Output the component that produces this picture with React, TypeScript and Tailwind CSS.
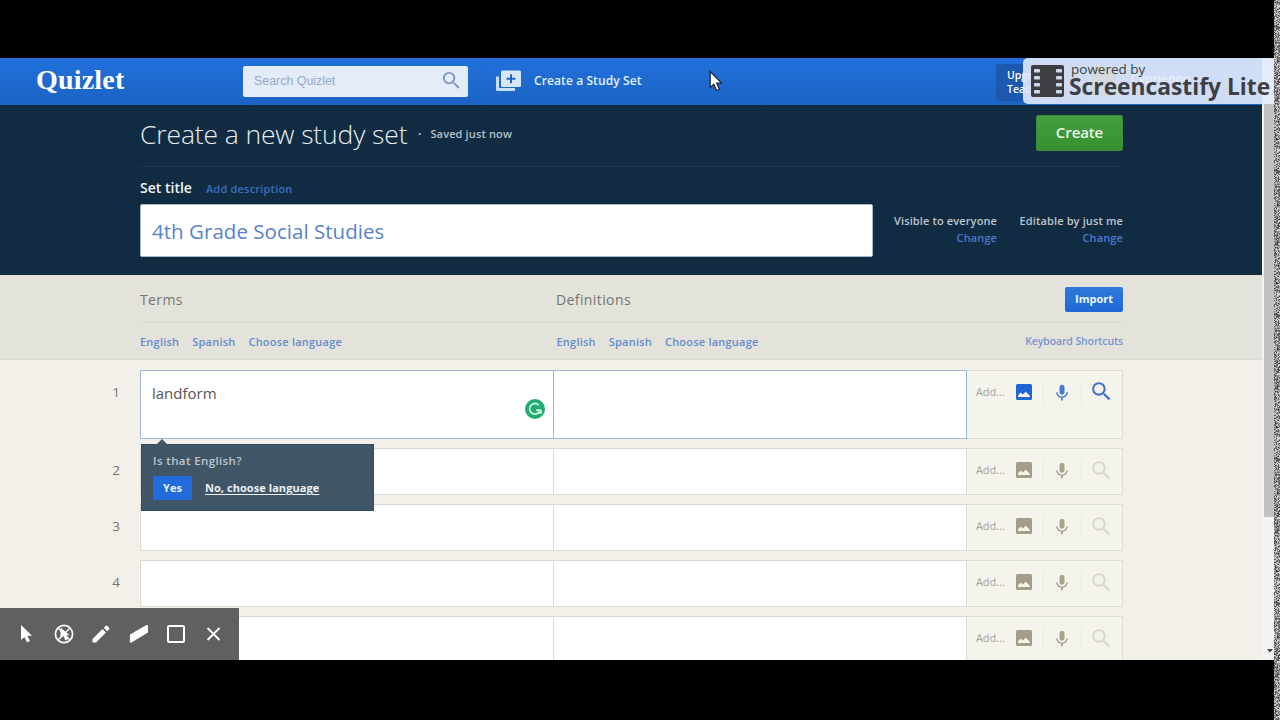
import React from "react";

const SANS = "font-['Open_Sans','Noto_Sans',sans-serif]";

function noiseCells() {
  let seed = 7919;
  const next = () => {
    seed = (seed * 1103515245 + 12345) % 2147483648;
    return seed / 2147483648;
  };
  const cells: { x: number; y: number; c: string }[] = [];
  for (let y = 0; y < 144; y++) {
    for (let x = 0; x < 6; x++) {
      const v = 50 + Math.floor(next() * 165);
      const r = v + Math.floor(next() * 24);
      const g = v + Math.floor(next() * 18);
      const b = v + Math.floor(next() * 24);
      cells.push({ x, y, c: `rgb(${r},${g},${b})` });
    }
  }
  return cells;
}

const CELLS = noiseCells();

function NoiseEdge() {
  return (
    <svg className="h-[720px] w-[6px] shrink-0" viewBox="0 0 6 720" shapeRendering="crispEdges">
      <defs>
        <pattern id="grain" width="6" height="144" patternUnits="userSpaceOnUse">
          {CELLS.map((p) => (
            <rect key={`${p.x}-${p.y}`} x={p.x} y={p.y} width="1" height="1" fill={p.c} />
          ))}
        </pattern>
      </defs>
      <rect width="6" height="720" fill="url(#grain)" />
    </svg>
  );
}

function SearchIcon({ className }: { className: string }) {
  return (
    <svg viewBox="0 0 24 24" fill="currentColor" className={className}>
      <path d="M15.5 14h-.79l-.28-.27A6.471 6.471 0 0 0 16 9.5 6.5 6.5 0 1 0 9.5 16c1.61 0 3.09-.59 4.23-1.57l.27.28v.79l5 4.99L20.49 19l-4.99-5zm-6 0C7.01 14 5 11.99 5 9.5S7.01 5 9.5 5 14 7.01 14 9.5 11.99 14 9.5 14z" />
    </svg>
  );
}

function MicIcon({ className }: { className: string }) {
  return (
    <svg viewBox="0 0 24 24" fill="currentColor" className={className}>
      <path d="M12 14c1.66 0 2.99-1.34 2.99-3L15 5c0-1.66-1.34-3-3-3S9 3.34 9 5v6c0 1.66 1.34 3 3 3zm5.3-3c0 3-2.54 5.1-5.3 5.1S6.7 14 6.7 11H5c0 3.41 2.72 6.23 6 6.72V21h2v-3.28c3.28-.48 6-3.3 6-6.72h-1.7z" />
    </svg>
  );
}

function ImageIcon({ className }: { className: string }) {
  return (
    <svg viewBox="0 0 16 16" className={className}>
      <rect width="16" height="16" rx="1.5" fill="currentColor" />
      <path d="M2 13V11.6L4.6 8.6L6.8 10.6L9.8 7.8L14 12V13Z" fill="#f4f3ec" />
    </svg>
  );
}

function Nav() {
  return (
    <header className="flex h-[47px] shrink-0 items-start bg-gradient-to-b from-[#2070dc] to-[#1c63c4]">
      <div className="ml-[36px] mt-[3px] w-[207px] font-['Liberation_Serif',serif] text-[28px] font-bold leading-[38px] tracking-[0.2px] text-white">
        Quizlet
      </div>
      <div className="mt-[8px] flex h-[31px] w-[225px] items-center justify-between rounded-[2px] bg-[#e3ecf8] pl-[11px] pr-[5px]">
        <span className="font-['Liberation_Sans',sans-serif] text-[12.5px] tracking-[-0.05px] text-[#97a9c8]">Search Quizlet</span>
        <SearchIcon className="-mt-[2px] h-[23px] w-[23px] text-[#8298c2]" />
      </div>
      <div className="ml-[14px] flex h-[47px] items-center border-l border-[#1f69cf] pl-[13px]">
        <svg viewBox="0 0 25 22" className="-mt-[2px] h-[22px] w-[25px]">
          <path d="M1.5 6.5V19.5H19" fill="none" stroke="#c9defa" strokeWidth="3" strokeLinejoin="round" />
          <rect x="5" y="0.5" width="20" height="16.5" rx="1.5" fill="#d8e7fc" />
          <path d="M15 4.3V13.3M10.5 8.8H19.5" stroke="#2167cb" strokeWidth="2" />
        </svg>
        <span className="-mt-px ml-[13px] w-[112px] whitespace-nowrap text-[12px] font-semibold tracking-[0.1px] text-[#e4effe]">Create a Study Set</span>
      </div>
      <div className="ml-[350px] mt-[6px] h-[37px] w-[90px] bg-[#1b58ae] pl-[11px] pt-[4px] text-[10.5px] font-semibold leading-[14px] text-white">
        Upgrade
        <br />
        Teacher
      </div>
    </header>
  );
}

function Permission({ label }: { label: string }) {
  return (
    <div className="text-right text-[11px] font-semibold leading-[17px] tracking-[0.13px] text-[#bdc6cf]">
      <div>{label}</div>
      <div className="text-[#487ace]">Change</div>
    </div>
  );
}

function SetHeader() {
  return (
    <section className="h-[170px] shrink-0 bg-[#112b42] pl-[140px]">
      <div className="w-[983px]">
        <div className="flex h-[62px] items-start justify-between border-b border-[#1d384e]">
          <div className="flex items-center pt-[9px]">
            <h1 className="w-[267px] whitespace-nowrap text-[26.5px] font-light leading-[40px] tracking-[-0.13px] text-[#e6ecf1]">Create a new study set</h1>
            <span className="ml-[11px] text-[12px] font-bold text-[#b4c0ca]">·</span>
            <span className="ml-[9px] text-[11px] font-semibold tracking-[0.14px] text-[#b4c0ca]">Saved just now</span>
          </div>
          <button className="mt-[10px] h-[36px] w-[87px] rounded-[2px] border border-[#3b8a35] bg-gradient-to-b from-[#459f41] to-[#37902f] pb-[2px] text-[15px] font-semibold tracking-[-0.1px] text-[#eaf6e9]">
            Create
          </button>
        </div>
        <div className="flex h-[37px] items-baseline pt-[10px]">
          <span className="text-[14px] font-semibold text-[#eef2f5]">Set title</span>
          <span className="ml-[14px] text-[11px] font-semibold tracking-[0.2px] text-[#3c6dbf]">Add description</span>
        </div>
        <div className="flex">
          <div className="flex h-[53px] w-[733px] items-center rounded-[2px] border border-[#aab8c8] bg-white pl-[11px] pt-px text-[20.5px] tracking-[0.03px] text-[#5883cb]">
            4th Grade Social Studies
          </div>
          <div className="flex flex-1 items-start justify-between pl-[21px] pt-[8px]">
            <Permission label="Visible to everyone" />
            <Permission label="Editable by just me" />
          </div>
        </div>
      </div>
    </section>
  );
}

function Languages() {
  return (
    <div className="flex w-[416.5px] gap-[13px] pt-[2px] text-[11px] font-semibold tracking-[0.22px] text-[#668bcd]">
      <span>English</span>
      <span>Spanish</span>
      <span>Choose language</span>
    </div>
  );
}

function ColumnHeader() {
  return (
    <section className="h-[85px] shrink-0 border-b border-[#dbdad2] bg-[#e3e2db] pl-[140px]">
      <div className="w-[983px]">
        <div className="flex h-[48px] items-center border-b border-[#d9d8d0] pt-[2px] text-[14px] tracking-[0.4px] text-[#77756f]">
          <span className="w-[416px]">Terms</span>
          <span>Definitions</span>
          <button className="ml-auto h-[25px] w-[58px] rounded-[2px] bg-gradient-to-b from-[#2f79da] to-[#2069d5] text-[11px] font-bold tracking-[0px] text-[#eff6ff]">
            Import
          </button>
        </div>
        <div className="flex h-[37px] items-center">
          <Languages />
          <Languages />
          <span className="ml-auto whitespace-nowrap pt-px text-[10.5px] font-semibold tracking-[-0.12px] text-[#7896d0]">Keyboard Shortcuts</span>
        </div>
      </div>
    </section>
  );
}

function TermRow({ n, term, active }: { n: number; term?: string; active?: boolean }) {
  return (
    <div className="flex shrink-0">
      <div className="w-[140px] pr-[20px] pt-[12px] text-right text-[13.5px] leading-[21px] text-[#77746e]">{n}</div>
      <div className={active ? "flex h-[69px] border border-[#9dbbd8]" : "flex h-[47px] border border-[#dcdbd3]"}>
        <div className={active ? "flex w-[413px] items-start justify-between border-r border-[#9dbbd8] bg-white pl-[11px] pr-[8px]" : "w-[413px] border-r border-[#dcdbd3] bg-white"}>
          {term && <span className="pt-[11px] text-[15px] leading-[22px] text-[#555]">{term}</span>}
          {active && (
            <svg viewBox="0 0 20 20" className="mt-[28px] h-[20px] w-[20px]">
              <circle cx="10" cy="10" r="10" fill="#21ad70" />
              <path d="M13.8 6.2A5.3 5.3 0 1 0 15 11.2H11" fill="none" stroke="#c8f3dc" strokeWidth="1.8" />
              <path d="M12.4 13.8H16V11" fill="none" stroke="#c8f3dc" strokeWidth="1.8" />
            </svg>
          )}
        </div>
        <div className="w-[412px] bg-white" />
      </div>
      <div className={active ? "flex h-[69px] w-[156px] items-start border border-l-0 border-[#dddcd5] bg-[#f4f3ec] pl-[9px] pt-[10px]" : "flex h-[47px] w-[156px] items-start border border-l-0 border-[#dddcd5] bg-[#f4f3ec] pl-[9px] pt-[10px]"}>
        <span className="w-[40px] text-[11px] leading-[22px] tracking-[-0.1px] text-[#a5a49c]">Add...</span>
        <ImageIcon className={active ? "mt-[3px] h-[16px] w-[16px] text-[#1f65d2]" : "mt-[3px] h-[16px] w-[16px] text-[#a49d88]"} />
        <div className="ml-[11px] mt-[1px] h-[22px] w-px bg-[#e9e8e0]" />
        <MicIcon className={active ? "ml-[8px] mt-[2px] h-[20px] w-[20px] text-[#477bd3]" : "ml-[8px] mt-[2px] h-[20px] w-[20px] text-[#aaa38f]"} />
        <div className="ml-[9px] mt-[1px] h-[22px] w-px bg-[#e9e8e0]" />
        <SearchIcon className={active ? "ml-[7px] h-[25px] w-[25px] -mt-[2px] text-[#3e72cd]" : "ml-[7px] h-[25px] w-[25px] -mt-[1px] text-[#d9d7ce]"} />
      </div>
    </div>
  );
}

function LanguagePrompt() {
  return (
    <div className="absolute left-[141px] top-[386px] h-[67px] w-[233px] border border-[#344c5f] bg-[#405567] pl-[11px] pt-[7px]">
      <svg viewBox="0 0 12 6" className="absolute -top-[6px] left-[14px] h-[6px] w-[12px]">
        <path d="M0 6L6 0L12 6Z" fill="#405567" />
      </svg>
      <div className="text-[11.5px] font-semibold leading-[17px] tracking-[0.38px] text-[#bdc7d0]">Is that English?</div>
      <div className="mt-[7px] flex items-center">
        <button className="h-[24px] w-[39px] bg-[#226bdc] text-[11px] font-bold text-[#e5f0ff]">Yes</button>
        <span className="ml-[13px] text-[11px] font-bold tracking-[0.06px] text-[#ecf1f5] underline underline-offset-2">No, choose language</span>
      </div>
    </div>
  );
}

function Toolbar() {
  return (
    <div className="absolute bottom-0 left-0 flex h-[52px] w-[239px] items-center gap-[17.5px] bg-[#606060] pl-[16px] text-white">
      <svg viewBox="0 0 20 20" className="h-5 w-5">
        <path d="M5 1V16L8.3 13L11 18.3L14 17L11.3 11.8H16Z" fill="currentColor" />
      </svg>
      <svg viewBox="0 0 20 20" className="h-5 w-5">
        <circle cx="10" cy="10" r="8.6" fill="none" stroke="currentColor" strokeWidth="1.7" />
        <path d="M6.5 3.5V14.5L9.5 12L11.5 16.5L14 15L12 11.2H15.5Z" fill="currentColor" />
        <path d="M4 4L16 16M16 4L4 16" stroke="currentColor" strokeWidth="1.3" />
      </svg>
      <svg viewBox="0 0 20 20" className="h-5 w-5">
        <path d="M1.5 15L11.5 5L15 8.5L5 18.5H1.5ZM12.8 3.8L14.6 2Q15.5 1.2 16.4 2L18 3.6Q18.8 4.5 18 5.4L16.2 7.2Z" fill="currentColor" />
      </svg>
      <svg viewBox="0 0 20 20" className="h-5 w-5">
        <path d="M1 10.5L17.5 1Q19 0.5 19 2V8.5L2.5 18.5Q.8 19 .8 17.5Z" fill="currentColor" />
      </svg>
      <svg viewBox="0 0 20 20" className="h-5 w-5">
        <rect x="2" y="2" width="16" height="16" rx="1" fill="none" stroke="currentColor" strokeWidth="2" />
      </svg>
      <svg viewBox="0 0 20 20" className="h-5 w-5">
        <path d="M3.5 4L15.5 16M15.5 4L3.5 16" stroke="currentColor" strokeWidth="1.8" />
      </svg>
    </div>
  );
}

function Watermark() {
  return (
    <div className="absolute left-[1023px] top-0 flex h-[46px] w-[251px] rounded-l-[5px] bg-[#e2eafa]/90 pl-[8px] pt-[7px]">
      <span className="absolute left-[108px] top-[12px] text-[12px] font-semibold text-white/50">Cyprienne</span>
      <span className="absolute left-[69px] top-[8px] h-[30px] w-[24px] bg-[#d8d9d0]/60" />
      <svg viewBox="0 0 33 32" className="relative h-[32px] w-[33px] shrink-0">
        <rect width="33" height="32" rx="2" fill="#3c3e42" />
        {[4, 11, 18, 25].map((y) => (
          <g key={y} fill="#cdd9ec">
            <rect x="3" y={y} width="6" height="3.5" rx="0.8" />
            <rect x="25" y={y} width="6" height="3.5" rx="0.8" />
          </g>
        ))}
      </svg>
      <div className="relative -mt-[5px] ml-[5px] whitespace-nowrap text-[#3d3f44]">
        <div className="pl-[2px] text-[13.5px] leading-[18px]">powered by</div>
        <div className="text-[22.8px] font-bold leading-[18px]">Screencastify Lite</div>
      </div>
    </div>
  );
}

export default function App() {
  return (
    <div className={`flex h-[720px] w-[1280px] overflow-hidden bg-black ${SANS}`}>
      <div className="flex w-[1274px] flex-col">
        <div className="h-[58px] shrink-0" />
        <main className="relative flex h-[602px] overflow-hidden">
          <div className="flex w-[1262px] flex-col bg-[#f3f0e9]">
            <Nav />
            <SetHeader />
            <ColumnHeader />
            <div className="flex flex-col gap-[9px] pt-[10px]">
              <TermRow n={1} term="landform" active />
              <TermRow n={2} />
              <TermRow n={3} />
              <TermRow n={4} />
              <TermRow n={5} />
            </div>
          </div>
          <div className="flex w-[12px] flex-col items-end bg-[#f3f3f3]">
            <div className="mt-[46px] h-[413px] w-[10px] bg-[#c2c2c2]" />
            <svg viewBox="0 0 6 4" className="mt-auto mb-[7px] mr-[1px] h-[4px] w-[6px]">
              <path d="M0 0H6L3 3.5Z" fill="#444" />
            </svg>
          </div>
          <LanguagePrompt />
          <Toolbar />
          <Watermark />
          <svg viewBox="0 0 14 22" className="absolute left-[709px] top-[12px] h-[22px] w-[14px]">
            <path d="M1.2 1.5V17.5L4.8 14.2L7.6 20.5L10.4 19.3L7.7 13.2H12.6Z" fill="#fff" stroke="#1a2433" strokeWidth="1.2" />
          </svg>
        </main>
      </div>
      <NoiseEdge />
    </div>
  );
}
